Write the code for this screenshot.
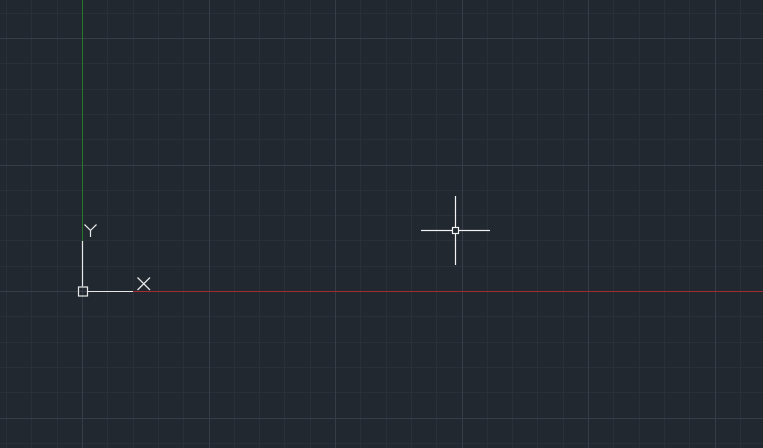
import React from 'react'

const W = 763
const H = 448
const OX = 82
const OY = 291
const MAJOR = 126.5
const MINOR = MAJOR / 5

const buildLines = () => {
    const minorV: number[] = []
    const majorV: number[] = []
    const minorH: number[] = []
    const majorH: number[] = []
    for (let i = -20; i <= 40; i++) {
        const x = OX + i * MINOR
        if (x < 0 || x > W) continue
        if (i % 5 === 0) majorV.push(x)
        else minorV.push(x)
    }
    for (let i = -20; i <= 20; i++) {
        const y = OY + i * MINOR
        if (y < 0 || y > H) continue
        if (i % 5 === 0) majorH.push(y)
        else minorH.push(y)
    }
    return { minorV, majorV, minorH, majorH }
}

// snap to pixel centre so 1px lines stay crisp
const px = (v: number) => Math.round(v) + 0.5

const CadCanvas = () => {
    const { minorV, majorV, minorH, majorH } = buildLines()
    const cx = 455.5
    const cy = 230.5

    return (
        <svg width={W} height={H} viewBox={`0 0 ${W} ${H}`} className="block">
            {/* minor grid */}
            <g stroke="#29303a" strokeWidth={1}>
                {minorV.map(x => <line key={`mv${x}`} x1={px(x)} y1={0} x2={px(x)} y2={H} />)}
                {minorH.map(y => <line key={`mh${y}`} x1={0} y1={px(y)} x2={W} y2={px(y)} />)}
            </g>
            {/* major grid */}
            <g stroke="#363d48" strokeWidth={1}>
                {majorV.map(x => <line key={`Mv${x}`} x1={px(x)} y1={0} x2={px(x)} y2={H} />)}
                {majorH.map(y => <line key={`Mh${y}`} x1={0} y1={px(y)} x2={W} y2={px(y)} />)}
            </g>

            {/* axes */}
            <line x1={82.5} y1={0} x2={82.5} y2={241} stroke="#2a752a" strokeWidth={1} />
            <line x1={133} y1={291.5} x2={W} y2={291.5} stroke="#a32b2e" strokeWidth={1} />

            {/* UCS icon */}
            <g stroke="#e8e8e8" strokeWidth={1.2} fill="none">
                <line x1={82.5} y1={241} x2={82.5} y2={286.5} />
                <line x1={87.5} y1={291.5} x2={133} y2={291.5} />
                <rect x={78.5} y={287} width={9} height={9} />
                {/* Y */}
                <polyline points="84.5,224.5 90.5,230.5 96.5,224.5" />
                <line x1={90.5} y1={230.5} x2={90.5} y2={237} />
                {/* X */}
                <line x1={137.5} y1={277.5} x2={150} y2={290} />
                <line x1={150} y1={277.5} x2={137.5} y2={290} />
            </g>

            {/* crosshair cursor */}
            <g stroke="#f2f2f2" strokeWidth={1.2} fill="none">
                <line x1={cx} y1={196} x2={cx} y2={227} />
                <line x1={cx} y1={234} x2={cx} y2={265} />
                <line x1={421} y1={cy} x2={452} y2={cy} />
                <line x1={459} y1={cy} x2={490} y2={cy} />
                <rect x={452.5} y={227.5} width={6} height={6} />
            </g>
        </svg>
    )
}

const App = () => {
    return (
        <div className="w-[763px] h-[448px] overflow-hidden bg-[#212830]">
            <CadCanvas />
        </div>
    )
}

export default App
